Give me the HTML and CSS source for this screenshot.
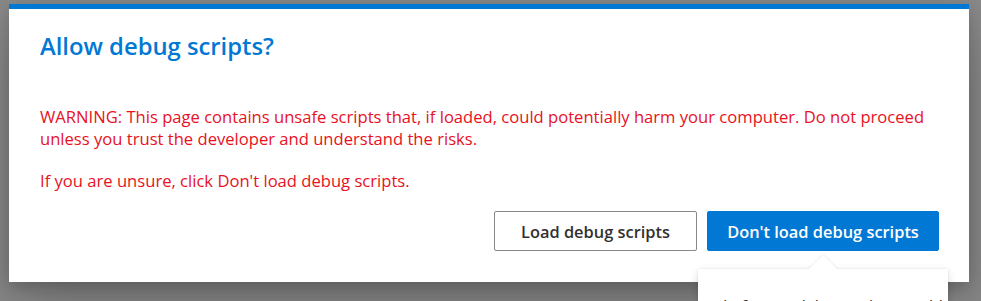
FILE: index.html
```html
<!DOCTYPE html>
<html lang="en">
<head>
<meta charset="utf-8">
<title>Allow debug scripts?</title>
<link rel="stylesheet" href="styles.css">
</head>
<body>
<div class="dialog">
  <h1 class="title">Allow debug scripts?</h1>
  <p class="warn">WARNING: This page contains unsafe scripts that, if loaded, could potentially harm your computer. Do not proceed unless you trust the developer and understand the risks.</p>
  <p class="warn warn-second">If you are unsure, click Don't load debug scripts.</p>
  <div class="actions">
    <button class="btn btn-default">Load debug scripts</button>
    <button class="btn btn-primary">Don't load debug scripts</button>
  </div>
</div>
<div class="callout">
  <div class="callout-inner">
    <p class="callout-text">In future, debug scripts are blocked</p>
  </div>
</div>
</body>
</html>
```

FILE: styles.css
```css
html, body {
  margin: 0;
  padding: 0;
}
body {
  width: 981px;
  height: 301px;
  overflow: hidden;
  background: #8a8a8a;
  font-family: "Open Sans", "Noto Sans", sans-serif;
  position: relative;
}
.dialog {
  margin: 4px 0 0 9px;
  width: 960px;
  box-sizing: border-box;
  background: #ffffff;
  border-top: 5px solid #0078d4;
  padding: 0 30px 31px 31px;
  box-shadow: 0 5px 15px rgba(0, 0, 0, 0.18), 0 26px 58px rgba(0, 0, 0, 0.22);
}
.title {
  margin: 21px 0 0 0;
  font-size: 23.8px;
  line-height: 32px;
  font-weight: 600;
  color: #0078d4;
}
.warn {
  margin: 43.5px 0 0 0;
  font-size: 16.6px;
  line-height: 22.5px;
  color: #e81123;
}
.warn-second {
  margin-top: 19px;
}
.actions {
  margin-top: 19px;
  display: flex;
  justify-content: flex-end;
  gap: 10px;
}
.btn {
  height: 40px;
  box-sizing: border-box;
  border-radius: 2px;
  font-family: "Open Sans", "Noto Sans", sans-serif;
  font-size: 16.4px;
  font-weight: 600;
  padding: 0;
  text-align: center;
}
.btn-default {
  width: 203px;
  background: #ffffff;
  border: 1px solid #8a8886;
  color: #323130;
}
.btn-primary {
  width: 232px;
  background: #0078d4;
  border: 1px solid #0078d4;
  color: #ffffff;
}
.callout {
  position: absolute;
  left: 698px;
  top: 269px;
  width: 250px;
  height: 32px;
  background: #ffffff;
  box-shadow: 0 3px 8px rgba(0, 0, 0, 0.14), 0 0 2px rgba(0, 0, 0, 0.1);
}
.callout::before {
  content: "";
  position: absolute;
  left: 115px;
  top: -10px;
  width: 20px;
  height: 20px;
  background: #ffffff;
  transform: rotate(45deg);
  box-shadow: 0 0 3px rgba(0, 0, 0, 0.12);
}
.callout-inner {
  position: relative;
  z-index: 1;
  height: 100%;
  overflow: hidden;
  background: #ffffff;
  padding: 26px 25px 0 25px;
  box-sizing: border-box;
}
.callout-text {
  margin: 0;
  font-size: 16px;
  line-height: 22.5px;
  color: #323130;
  white-space: nowrap;
}
```
